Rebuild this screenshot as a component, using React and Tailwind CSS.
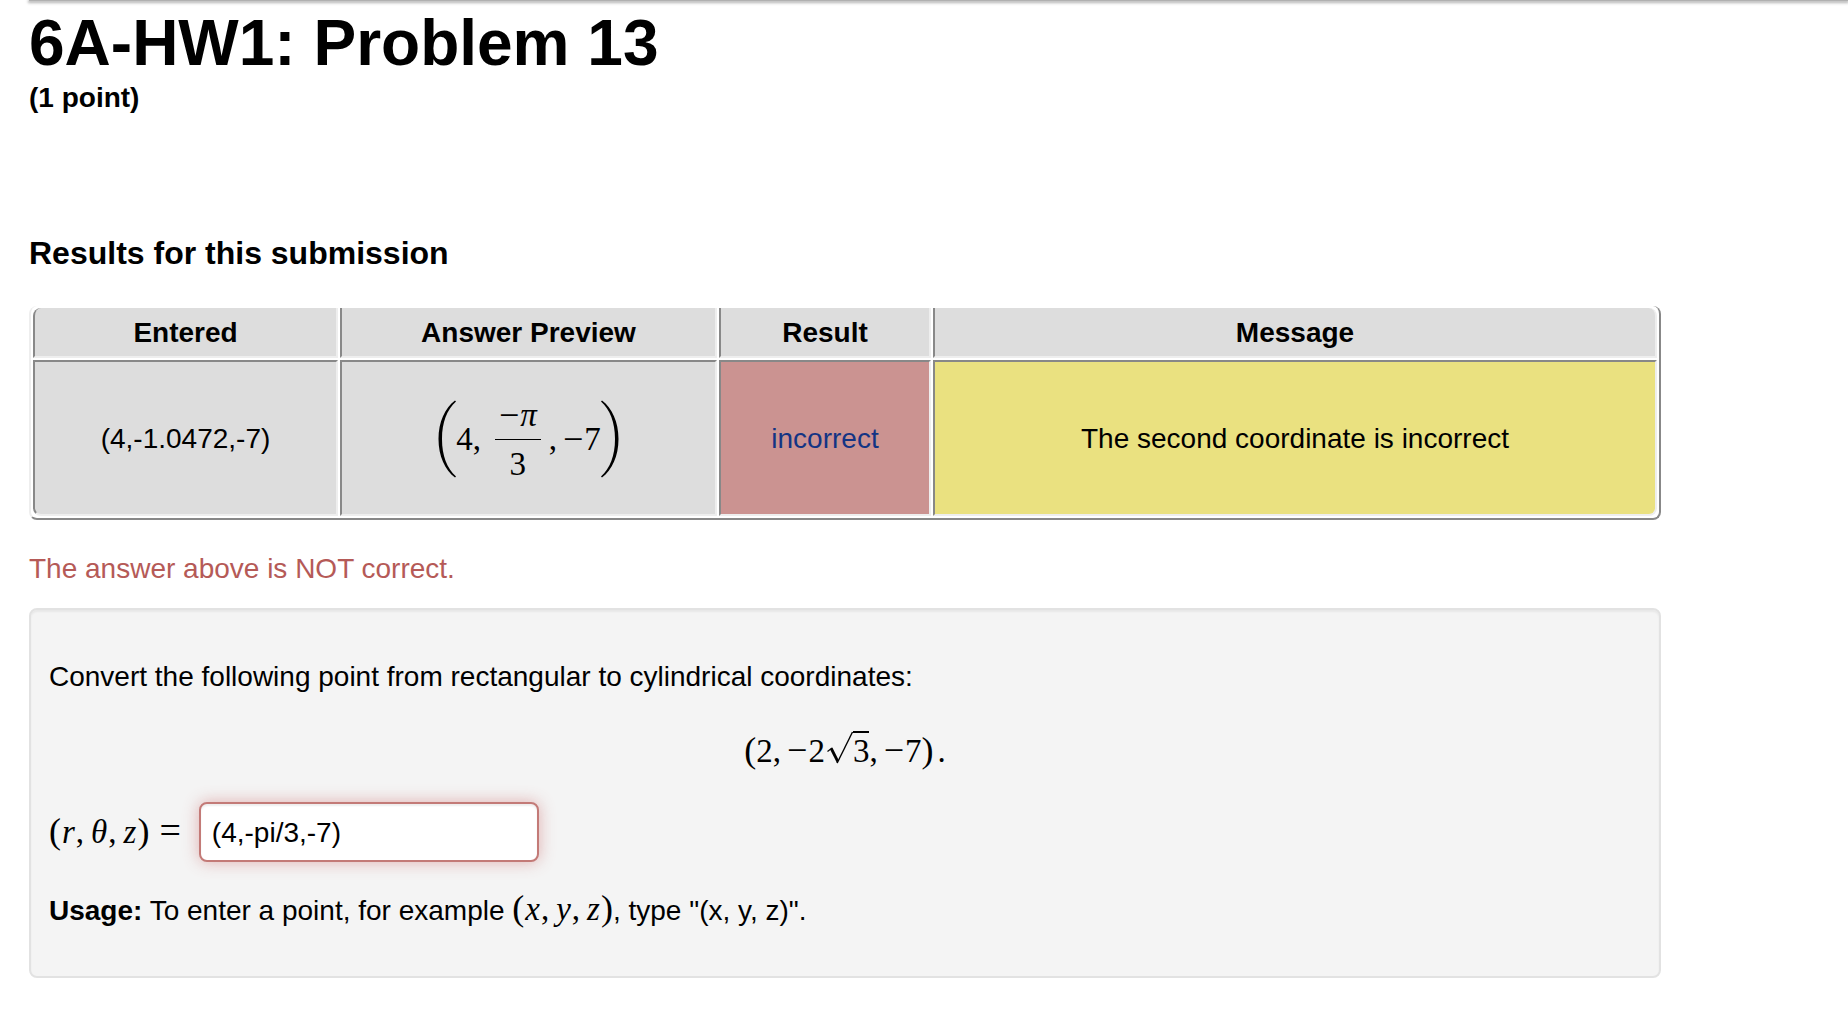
/**
 * App.jsx
 * Homework problem page: results table for the last submission and the problem body
 */

import React, { useState } from 'react';

// Math snippets share the serif face used for formulas
const MathText = ({ children }) => (
  <span className="inline-flex items-baseline whitespace-nowrap font-['Liberation_Serif',serif] text-[33px] leading-10">
    {children}
  </span>
);

const Paren = ({ children }) => <span className="text-[36px] leading-10">{children}</span>;

const Comma = () => <span className="mr-1.5">,</span>;

const Minus = () => <span className="pr-px text-[36px] leading-10">−</span>;

const Var = ({ children }) => <i className="px-px">{children}</i>;

const TallParen = ({ flip }) => (
  <svg
    width="18"
    height="78"
    viewBox="0 0 18 78"
    className={flip ? '-scale-x-100' : ''}
    aria-hidden="true"
  >
    <path d="M17 0.5C7 8 0.5 22 0.5 39C0.5 56 7 70 17 77.5L18 76.5C9 68 4 56 4 39C4 22 9 10 18 1.5Z" fill="black" />
  </svg>
);

const Root = ({ children }) => (
  <span className="inline-flex items-baseline">
    <svg width="26" height="33" viewBox="0 0 26 33" className="ml-0.5 self-start" aria-hidden="true">
      <path d="M0.5 20.5L5 17" fill="none" stroke="black" strokeWidth="1.2" />
      <path d="M3 18.2L5.4 16.6L11.4 28.5L10.2 32.5Z" fill="black" />
      <path d="M10.2 32L25.5 1" stroke="black" strokeWidth="1.4" />
    </svg>
    <span className="border-t-2 border-black leading-[36px]">{children}</span>
  </span>
);

// (4, -pi/3, -7)
const AnswerPreview = () => (
  <div className="flex items-center justify-center font-['Liberation_Serif',serif] text-[33px] leading-10">
    <TallParen />
    <span>4</span>
    <Comma />
    <span className="mx-2 inline-flex flex-col items-center">
      <span className="flex border-b border-black px-1 pb-1 leading-10">
        <Minus />
        <i>π</i>
      </span>
      <span className="pt-1 leading-10">3</span>
    </span>
    <Comma />
    <Minus />
    <span>7</span>
    <TallParen flip />
  </div>
);

const headCell =
  'border-2 border-t-0 border-l-[#888] border-r-[#eee] border-b-[#eee] bg-[#ddd] pt-[5px] pb-[3px] text-center font-bold';
const bodyCell =
  'h-[156px] border-2 border-t-[#888] border-l-[#888] border-r-[#eee] border-b-[#eee] pt-0.5 text-center align-middle';

const ResultsTable = () => (
  <table className="mt-[33px] w-full table-fixed border-separate border-spacing-0.5 rounded-lg border-2 border-t-0 border-l-[#eee] border-r-[#888] border-b-[#888]">
    <colgroup>
      <col className="w-[305px]" />
      <col className="w-[377px]" />
      <col className="w-[212px]" />
      <col />
    </colgroup>
    <thead>
      <tr>
        <th className={`${headCell} rounded-tl-lg`}>Entered</th>
        <th className={headCell}>Answer Preview</th>
        <th className={headCell}>Result</th>
        <th className={`${headCell} rounded-tr-lg`}>Message</th>
      </tr>
    </thead>
    <tbody>
      <tr>
        <td className={`${bodyCell} rounded-bl-lg bg-[#ddd]`}>(4,-1.0472,-7)</td>
        <td className={`${bodyCell} bg-[#ddd]`}>
          <AnswerPreview />
        </td>
        <td className={`${bodyCell} bg-[#cb9391]`}>
          <a href="#answer" className="text-[#133484]">incorrect</a>
        </td>
        <td className={`${bodyCell} rounded-br-lg bg-[#eae180]`}>
          The second coordinate is incorrect
        </td>
      </tr>
    </tbody>
  </table>
);

const App = () => {
  const [answer, setAnswer] = useState('(4,-pi/3,-7)');

  return (
    <div className="bg-white pl-[29px] font-['Liberation_Sans',Arial,sans-serif] text-[28px] leading-10 text-black">
      {/* Bottom edge of the navigation bar */}
      <div className="h-px bg-[#b0b0b0] shadow-[0_1px_3px_1px_rgba(0,0,0,0.3)]" />

      <main className="pr-[187px] pt-2 pb-[46px]">
        <h1 className="text-[64px] leading-[68px] font-bold">6A-HW1: Problem 13</h1>
        <p className="mt-px font-bold">(1 point)</p>

        <h2 className="mt-[115px] text-[32px] leading-10 font-bold">Results for this submission</h2>
        <ResultsTable />

        <p className="mt-[29px] text-[#b55a57]">The answer above is NOT correct.</p>

        {/* Problem body */}
        <section className="mt-[19px] rounded-lg border-2 border-[#e2e2e2] bg-[#f4f4f4] px-[18px] pt-[47px] pb-12 shadow-[inset_0_2px_2px_rgba(0,0,0,0.05)]">
          <p>Convert the following point from rectangular to cylindrical coordinates:</p>

          <div className="mt-[33px] flex h-10 justify-center">
            <MathText>
              <Paren>(</Paren>2<Comma />
              <Minus />2<Root>3</Root>
              <Comma />
              <Minus />7<Paren>)</Paren>
              <span className="pl-1">.</span>
            </MathText>
          </div>

          <div className="mt-8 flex items-center">
            <label htmlFor="answer" className="mr-[18px]">
              <MathText>
                <Paren>(</Paren>
                <Var>r</Var>
                <Comma />
                <Var>θ</Var>
                <Comma />
                <Var>z</Var>
                <Paren>)</Paren>
                <span className="ml-2.5 text-[38px] leading-10">=</span>
              </MathText>
            </label>
            <input
              id="answer"
              type="text"
              value={answer}
              onChange={e => setAnswer(e.target.value)}
              className="h-[60px] w-[340px] rounded-lg border-2 border-[#c37a77] bg-white px-[11px] pt-0.5 shadow-[inset_0_2px_2px_rgba(0,0,0,0.07),0_0_16px_rgba(200,90,90,0.45)] outline-none"
            />
          </div>

          <p className="mt-[26px] h-10">
            <b>Usage:</b> To enter a point, for example{' '}
            <MathText>
              <Paren>(</Paren>
              <Var>x</Var>
              <Comma />
              <Var>y</Var>
              <Comma />
              <Var>z</Var>
              <Paren>)</Paren>
            </MathText>
            , type "(x, y, z)".
          </p>
        </section>
      </main>
    </div>
  );
};

export default App;
